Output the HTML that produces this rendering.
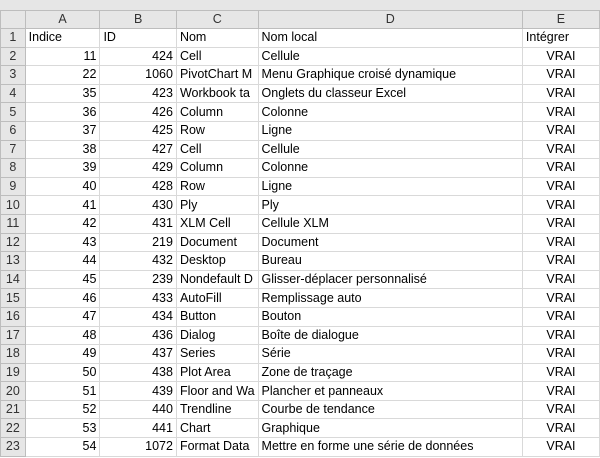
<!DOCTYPE html><html><head><style>
body{margin:0;width:600px;height:458px;background:#fff;overflow:hidden;font-family:"Liberation Sans",sans-serif;font-size:12.5px;color:#000}
.top{position:absolute;left:0;top:0;width:600px;height:11px;background:#e6e6e6}
table{position:absolute;left:0;top:10px;border-collapse:collapse;table-layout:fixed}
td{height:17.6px;padding:0 3px;border:1px solid #d9d9d9;white-space:nowrap;overflow:hidden;line-height:17px}
tr.h td{background:#e6e6e6;text-align:center;border-color:#bdbdbd;color:#333;height:17px}
td.r{background:#e6e6e6;text-align:center;padding:0;border-color:#bdbdbd;color:#333}
.n{text-align:right}.c{text-align:center}
</style></head><body><div class="top"></div><table>
<colgroup><col style="width:25px"><col style="width:76px"><col style="width:78px"><col style="width:77px"><col style="width:266px"><col style="width:78px"></colgroup>
<tr class="h"><td></td><td>A</td><td>B</td><td>C</td><td>D</td><td>E</td></tr>
<tr><td class="r">1</td><td>Indice</td><td>ID</td><td>Nom</td><td>Nom local</td><td>Intégrer</td></tr>
<tr><td class="r">2</td><td class="n">11</td><td class="n">424</td><td>Cell</td><td>Cellule</td><td class="c">VRAI</td></tr>
<tr><td class="r">3</td><td class="n">22</td><td class="n">1060</td><td>PivotChart M</td><td>Menu Graphique croisé dynamique</td><td class="c">VRAI</td></tr>
<tr><td class="r">4</td><td class="n">35</td><td class="n">423</td><td>Workbook ta</td><td>Onglets du classeur Excel</td><td class="c">VRAI</td></tr>
<tr><td class="r">5</td><td class="n">36</td><td class="n">426</td><td>Column</td><td>Colonne</td><td class="c">VRAI</td></tr>
<tr><td class="r">6</td><td class="n">37</td><td class="n">425</td><td>Row</td><td>Ligne</td><td class="c">VRAI</td></tr>
<tr><td class="r">7</td><td class="n">38</td><td class="n">427</td><td>Cell</td><td>Cellule</td><td class="c">VRAI</td></tr>
<tr><td class="r">8</td><td class="n">39</td><td class="n">429</td><td>Column</td><td>Colonne</td><td class="c">VRAI</td></tr>
<tr><td class="r">9</td><td class="n">40</td><td class="n">428</td><td>Row</td><td>Ligne</td><td class="c">VRAI</td></tr>
<tr><td class="r">10</td><td class="n">41</td><td class="n">430</td><td>Ply</td><td>Ply</td><td class="c">VRAI</td></tr>
<tr><td class="r">11</td><td class="n">42</td><td class="n">431</td><td>XLM Cell</td><td>Cellule XLM</td><td class="c">VRAI</td></tr>
<tr><td class="r">12</td><td class="n">43</td><td class="n">219</td><td>Document</td><td>Document</td><td class="c">VRAI</td></tr>
<tr><td class="r">13</td><td class="n">44</td><td class="n">432</td><td>Desktop</td><td>Bureau</td><td class="c">VRAI</td></tr>
<tr><td class="r">14</td><td class="n">45</td><td class="n">239</td><td>Nondefault D</td><td>Glisser-déplacer personnalisé</td><td class="c">VRAI</td></tr>
<tr><td class="r">15</td><td class="n">46</td><td class="n">433</td><td>AutoFill</td><td>Remplissage auto</td><td class="c">VRAI</td></tr>
<tr><td class="r">16</td><td class="n">47</td><td class="n">434</td><td>Button</td><td>Bouton</td><td class="c">VRAI</td></tr>
<tr><td class="r">17</td><td class="n">48</td><td class="n">436</td><td>Dialog</td><td>Boîte de dialogue</td><td class="c">VRAI</td></tr>
<tr><td class="r">18</td><td class="n">49</td><td class="n">437</td><td>Series</td><td>Série</td><td class="c">VRAI</td></tr>
<tr><td class="r">19</td><td class="n">50</td><td class="n">438</td><td>Plot Area</td><td>Zone de traçage</td><td class="c">VRAI</td></tr>
<tr><td class="r">20</td><td class="n">51</td><td class="n">439</td><td>Floor and Wa</td><td>Plancher et panneaux</td><td class="c">VRAI</td></tr>
<tr><td class="r">21</td><td class="n">52</td><td class="n">440</td><td>Trendline</td><td>Courbe de tendance</td><td class="c">VRAI</td></tr>
<tr><td class="r">22</td><td class="n">53</td><td class="n">441</td><td>Chart</td><td>Graphique</td><td class="c">VRAI</td></tr>
<tr><td class="r">23</td><td class="n">54</td><td class="n">1072</td><td>Format Data</td><td>Mettre en forme une série de données</td><td class="c">VRAI</td></tr>
</table></body></html>
